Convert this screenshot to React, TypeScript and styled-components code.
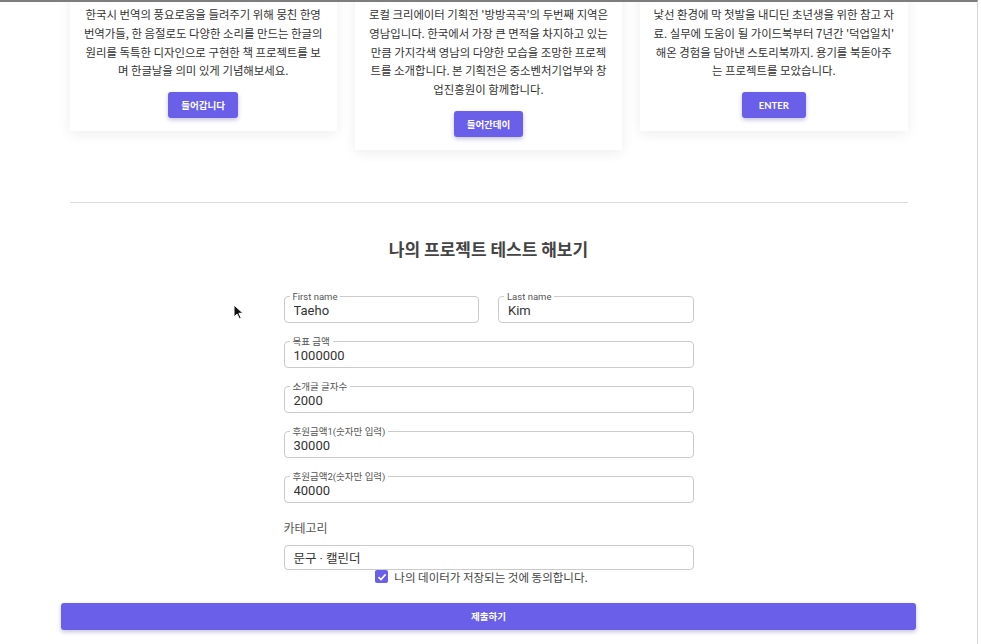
import styled, { createGlobalStyle } from "styled-components";

const PURPLE = "#6a5fe8";

const GlobalStyle = createGlobalStyle`
	html, body {
		margin: 0;
		padding: 0;
		background: #fff;
	}
	body {
		font-family: "Roboto", "Noto Sans CJK KR", sans-serif;
		color: #333;
	}
`;

type CardData = {
	text: string;
	button: string;
};

const cards: CardData[] = [
	{
		text: "한국시 번역의 풍요로움을 들려주기 위해 뭉친 한영 번역가들, 한 음절로도 다양한 소리를 만드는 한글의 원리를 독특한 디자인으로 구현한 책 프로젝트를 보며 한글날을 의미 있게 기념해보세요.",
		button: "들어갑니다",
	},
	{
		text: "로컬 크리에이터 기획전 '방방곡곡'의 두번째 지역은 영남입니다. 한국에서 가장 큰 면적을 차지하고 있는 만큼 가지각색 영남의 다양한 모습을 조망한 프로젝트를 소개합니다. 본 기획전은 중소벤처기업부와 창업진흥원이 함께합니다.",
		button: "들어간데이",
	},
	{
		text: "낯선 환경에 막 첫발을 내디딘 초년생을 위한 참고 자료. 실무에 도움이 될 가이드북부터 7년간 '덕업일치' 해온 경험을 담아낸 스토리북까지. 용기를 북돋아주는 프로젝트를 모았습니다.",
		button: "ENTER",
	},
];

const fields = [
	{ label: "목표 금액", value: "1000000" },
	{ label: "소개글 글자수", value: "2000" },
	{ label: "후원금액1(숫자만 입력)", value: "30000" },
	{ label: "후원금액2(숫자만 입력)", value: "40000" },
];

const Field = ({ label, value }: { label: string; value: string }) => (
	<Styled.Fieldset>
		<Styled.Legend>{label}</Styled.Legend>
		<Styled.Input defaultValue={value} />
	</Styled.Fieldset>
);

const App = () => {
	return (
		<Styled.Page>
			<GlobalStyle />
			<Styled.Cards>
				{cards.map((card) => (
					<Styled.Card key={card.button}>
						<StyledText.CardText>{card.text}</StyledText.CardText>
						<Styled.CardButton>{card.button}</Styled.CardButton>
					</Styled.Card>
				))}
			</Styled.Cards>
			<Styled.Divider />
			<StyledText.Title>나의 프로젝트 테스트 해보기</StyledText.Title>
			<Styled.Form onSubmit={(e) => e.preventDefault()}>
				<Styled.NameRow>
					<Field label="First name" value="Taeho" />
					<Field label="Last name" value="Kim" />
				</Styled.NameRow>
				{fields.map((f) => (
					<Field key={f.label} label={f.label} value={f.value} />
				))}
				<StyledText.CategoryLabel>카테고리</StyledText.CategoryLabel>
				<Styled.Select>문구 · 캘린더</Styled.Select>
				<Styled.Agree>
					<Styled.Check>
						<svg width="10" height="10" viewBox="0 0 10 10">
							<path d="M1.5 5.2 L4 7.6 L8.6 2.4" fill="none" stroke="#fff" strokeWidth="1.6" />
						</svg>
					</Styled.Check>
					나의 데이터가 저장되는 것에 동의합니다.
				</Styled.Agree>
			</Styled.Form>
			<Styled.Submit>제출하기</Styled.Submit>
			<Styled.Cursor width="11" height="16" viewBox="0 0 11 16">
				<path d="M1 1 L1 13 L4 10 L6.5 15 L8.3 14.2 L5.9 9.3 L10 9.3 Z" fill="#111" stroke="#fff" strokeWidth="1" />
			</Styled.Cursor>
		</Styled.Page>
	);
};

export default App;

const Styled = {
	Page: styled.div`
		position: relative;
		height: 642px;
		margin-right: 3px;
		border-top: 2px solid #7d7d7d;
		border-right: 1px solid #d6d6d6;
		overflow: hidden;
		display: flex;
		flex-direction: column;
		align-items: center;
	`,
	Cards: styled.div`
		width: 838px;
		margin-top: -30px;
		display: grid;
		grid-template-columns: repeat(3, 1fr);
		gap: 18px;
		align-items: start;
	`,
	Card: styled.div`
		padding: 33px 11px 13px;
		background: #fff;
		box-shadow: 0 3px 12px rgba(0, 0, 0, 0.07);
		display: flex;
		flex-direction: column;
		align-items: center;
	`,
	CardButton: styled.button`
		margin-top: 12px;
		height: 26px;
		min-width: 64px;
		padding: 0 13px;
		border: none;
		border-radius: 3px;
		background: ${PURPLE};
		color: #fff;
		font-family: "Lato", "Noto Sans CJK KR", sans-serif;
		font-size: 9.5px;
		font-weight: 700;
		box-shadow: 0 2px 4px rgba(60, 50, 160, 0.3);
		cursor: pointer;
	`,
	Divider: styled.hr`
		width: 838px;
		margin: 52px 0 0;
		border: none;
		border-top: 1px solid #dcdcdc;
	`,
	Form: styled.form`
		width: 410px;
		margin-top: 31px;
		display: flex;
		flex-direction: column;
		gap: 14px;
	`,
	NameRow: styled.div`
		display: grid;
		grid-template-columns: 1fr 1fr;
		gap: 19px;
	`,
	Fieldset: styled.fieldset`
		margin: 0;
		padding: 0 9px 3px;
		border: 1px solid #cbcbcb;
		border-radius: 4px;
		min-width: 0;
	`,
	Legend: styled.legend`
		padding: 0 3px;
		margin-left: -4px;
		font-size: 9.5px;
		line-height: 10px;
		color: #555;
	`,
	Input: styled.input`
		display: block;
		width: 100%;
		height: 17px;
		padding: 0;
		border: none;
		outline: none;
		background: transparent;
		font-family: "Roboto", "Noto Sans CJK KR", sans-serif;
		font-size: 13px;
		color: #333;
	`,
	Select: styled.div`
		margin-top: -5px;
		height: 25px;
		box-sizing: border-box;
		padding: 0 9px;
		border: 1px solid #cbcbcb;
		border-radius: 4px;
		display: flex;
		align-items: center;
		font-family: "Roboto", "Noto Sans CJK KR", sans-serif;
		font-size: 12.5px;
		color: #333;
	`,
	Agree: styled.label`
		margin-top: -14px;
		display: flex;
		align-items: center;
		justify-content: center;
		gap: 6px;
		height: 14px;
		padding-right: 14px;
		font-family: "Noto Sans CJK KR", sans-serif;
		font-size: 11.5px;
		color: #444;
	`,
	Check: styled.span`
		width: 13px;
		height: 13px;
		border-radius: 2px;
		background: ${PURPLE};
		display: flex;
		align-items: center;
		justify-content: center;
	`,
	Submit: styled.button`
		width: 855px;
		height: 27px;
		margin-top: 19px;
		border: none;
		border-radius: 3px;
		background: ${PURPLE};
		color: #fff;
		font-family: "Noto Sans CJK KR", sans-serif;
		font-size: 9.5px;
		font-weight: 700;
		box-shadow: 0 2px 4px rgba(60, 50, 160, 0.3);
		cursor: pointer;
	`,
	Cursor: styled.svg`
		position: absolute;
		left: 233px;
		top: 302px;
	`,
};

const StyledText = {
	CardText: styled.p`
		margin: 0;
		font-family: "Noto Sans CJK KR", sans-serif;
		font-size: 11.4px;
		line-height: 18.8px;
		color: #333;
		text-align: center;
		word-break: break-all;
	`,
	Title: styled.h2`
		margin: 34px 0 0;
		font-family: "Noto Sans CJK KR", sans-serif;
		font-size: 17px;
		line-height: 24px;
		font-weight: 700;
		color: #444;
	`,
	CategoryLabel: styled.p`
		margin: 3px 0 0;
		font-family: "Noto Sans CJK KR", sans-serif;
		font-size: 12px;
		line-height: 16px;
		color: #555;
	`,
};
